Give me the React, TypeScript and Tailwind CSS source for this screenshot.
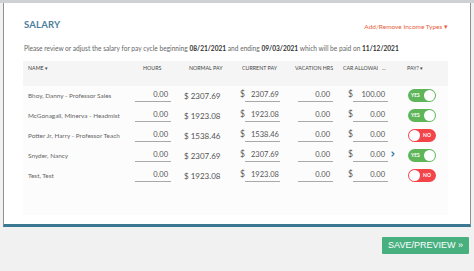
import { ChevronRight } from "lucide-react";

type Row = {
  name: string;
  hours: string;
  normal: string;
  current: string;
  vacation: string;
  car: string;
  pay: boolean;
  more?: boolean;
};

const rows: Row[] = [
  { name: "Bhoy, Danny - Professor Sales", hours: "0.00", normal: "2307.69", current: "2307.69", vacation: "0.00", car: "100.00", pay: true },
  { name: "McGonagall, Minerva - Headmist", hours: "0.00", normal: "1923.08", current: "1923.08", vacation: "0.00", car: "0.00", pay: true },
  { name: "Potter Jr, Harry - Professor Teach", hours: "0.00", normal: "1538.46", current: "1538.46", vacation: "0.00", car: "0.00", pay: false },
  { name: "Snyder, Nancy", hours: "0.00", normal: "2307.69", current: "2307.69", vacation: "0.00", car: "0.00", pay: true, more: true },
  { name: "Test, Test", hours: "0.00", normal: "1923.08", current: "1923.08", vacation: "0.00", car: "0.00", pay: false },
];

function Field({ value, align = "right", width = "w-[35px]" }: { value: string; align?: "left" | "right"; width?: string }) {
  return (
    <div
      className={`${width} h-[13px] border-b border-[#a9a9a9] text-[7.5px] leading-[12px] text-[#555] ${
        align === "right" ? "text-right pr-[3px]" : "text-left pl-[6px]"
      }`}
    >
      {value}
    </div>
  );
}

function Toggle({ on }: { on: boolean }) {
  if (on) {
    return (
      <div className="w-[28px] h-[13px] rounded-full bg-[#5fb55a] flex items-center justify-between pl-[3px] pr-[1px]">
        <span className="text-[5px] font-bold text-white">YES</span>
        <span className="w-[11px] h-[11px] rounded-full bg-white" />
      </div>
    );
  }
  return (
    <div className="w-[28px] h-[13px] rounded-full bg-[#f2454a] flex items-center justify-between pl-[1px] pr-[5px]">
      <span className="w-[11px] h-[11px] rounded-full bg-white" />
      <span className="text-[5px] font-bold text-white">NO</span>
    </div>
  );
}

export default function App() {
  return (
    <div className="w-[474px] h-[271px] bg-[#f1f1f1] border-t-[3px] border-[#cdd1d4] overflow-hidden font-['Lato',_'Liberation_Sans',_sans-serif]">
      <div className="mx-[3px] h-[224px] bg-white border-x border-[#8c9196] border-b-[3px] border-b-[#3b7892] pl-[19px] pr-[22px] pt-[16px]">
        <div className="flex items-center justify-between pl-[1px]">
          <h2 className="text-[9.5px] leading-[12px] font-bold text-[#4a7f99] tracking-[0.2px]">SALARY</h2>
          <span className="text-[6.5px] text-[#e8603c] mt-[3px]">Add/Remove Income Types ▾</span>
        </div>
        <p className="mt-[11px] pl-[1px] text-[6.6px] leading-[10px] text-[#666] whitespace-nowrap">
          Please review or adjust the salary for pay cycle beginning <b className="text-[#333]">08/21/2021</b> and ending{" "}
          <b className="text-[#333]">09/03/2021</b> which will be paid on <b className="text-[#333]">11/12/2021</b>
        </p>

        <div className="mt-[8px] bg-[#fcfcfc] pb-[29px]">
          <div className="h-[25px] bg-[#f5f5f5] flex items-start pt-[4px] text-[5.3px] text-[#444] uppercase whitespace-nowrap">
            <span className="pl-[5px] w-[112px]">Name ▾</span>
            <span className="w-[36px] pl-[8px]">Hours</span>
            <span className="ml-[13px] w-[56px] pl-[5px]">Normal Pay</span>
            <span className="w-[53px] pl-[2px]">Current Pay</span>
            <span className="w-[50px] pl-[2px]">Vacation Hrs</span>
            <span className="w-[35px] overflow-hidden">Car Allowai</span>
            <span className="w-[25px] pl-[4px]">...</span>
            <span className="w-[28px] pl-[4px]">Pay? ▾</span>
          </div>

          {rows.map((r) => (
            <div key={r.name} className="h-[20px] flex items-center whitespace-nowrap">
              <span className="pl-[5px] w-[112px] text-[6.4px] text-[#666] overflow-hidden">{r.name}</span>
              <Field value={r.hours} width="w-[36px]" />
              <span className="ml-[13px] w-[56px] text-[8px] text-[#555]">$ {r.normal}</span>
              <span className="w-[5px] text-[8.5px] text-[#555] -mt-[3px]">$</span>
              <Field value={r.current} align="left" />
              <div className="ml-[18px]">
                <Field value={r.vacation} />
              </div>
              <span className="ml-[15px] w-[5px] text-[8.5px] text-[#555] -mt-[3px]">$</span>
              <Field value={r.car} />
              <div className="w-[20px] h-[12px] flex items-start">
                {r.more && <ChevronRight className="w-[8px] h-[8px] ml-[1px] text-[#2f78a8]" strokeWidth={3.5} />}
              </div>
              <Toggle on={r.pay} />
            </div>
          ))}
        </div>
      </div>

      <div className="flex justify-end pr-[5px] mt-[10px]">
        <button className="w-[87px] h-[17px] bg-[#48b07f] text-white text-[9px] leading-[17px] text-center rounded-[1px] font-['Liberation_Sans',_sans-serif]">
          SAVE/PREVIEW »
        </button>
      </div>
    </div>
  );
}
